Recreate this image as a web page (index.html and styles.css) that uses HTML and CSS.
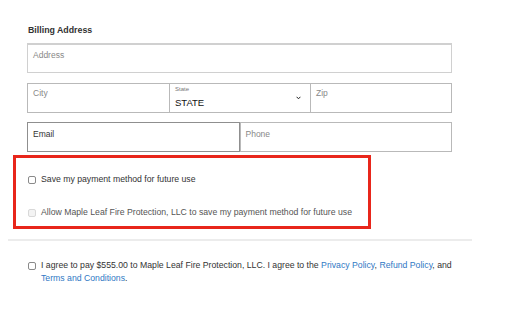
FILE: index.html
```html
<!DOCTYPE html>
<html lang="en">
<head>
    <meta charset="UTF-8">
    <title>Billing Address</title>
    <link rel="stylesheet" href="styles.css">
</head>
<body>
    <div class="wrap">
        <!--1. billing form-->
        <section class="billing">
            <h2 class="tit">Billing Address</h2>

            <div class="row one">
                <div class="cell"><span class="ph">Address</span></div>
            </div>

            <div class="row three">
                <div class="cell"><span class="ph">City</span></div>
                <div class="cell state">
                    <span class="lbl">State</span>
                    <span class="val">STATE</span>
                    <svg class="chev" width="5" height="4" viewBox="0 0 5 4">
                        <path d="M0.6 0.8 L2.5 2.8 L4.4 0.8" fill="none" stroke="#222" stroke-width="1"/>
                    </svg>
                </div>
                <div class="cell"><span class="ph">Zip</span></div>
            </div>

            <div class="row two">
                <div class="cell focus"><span class="ph dark">Email</span></div>
                <div class="cell"><span class="ph">Phone</span></div>
            </div>

            <!--2. save options (red marked)-->
            <div class="mark">
                <label class="chk">
                    <input type="checkbox">
                    <span>Save my payment method for future use</span>
                </label>
                <label class="chk off">
                    <input type="checkbox" disabled>
                    <span>Allow Maple Leaf Fire Protection, LLC to save my payment method for future use</span>
                </label>
            </div>
        </section>

        <hr class="line">

        <!--3. agree-->
        <section class="billing">
            <label class="chk agree">
                <input type="checkbox">
                <span>I agree to pay $555.00 to Maple Leaf Fire Protection, LLC. I agree to the <a href="#">Privacy Policy</a>, <a href="#">Refund Policy</a>, and <a href="#">Terms and Conditions</a>.</span>
            </label>
        </section>
    </div>
</body>
</html>
```

FILE: styles.css
```css
html,
body,
h2 {
    margin: 0;
    padding: 0;
}

body {
    background-color: #fff;
    font-family: "Liberation Sans", Arial, sans-serif;
    color: #333;
}

/*outer box*/
.wrap {
    width: 464px;
    margin-left: 8px;
    padding-top: 24px;
}

.billing {
    padding: 0 20px 0 19px;
}

/*1. title*/
.tit {
    font-size: 8.8px;
    line-height: 12px;
    font-weight: bold;
    color: #333;
    padding-left: 1px;
    margin-bottom: 7px;
}

/*input rows*/
.row {
    display: grid;
    height: 30px;
    box-sizing: border-box;
    border: 1px solid #b9b9b9;
    margin-bottom: 10px;
}
.row.one {
    border-color: #d0d0d0;
    border-top-width: 2px;
}
.row.three {
    grid-template-columns: 1fr 1fr 1fr;
}
.row.two {
    grid-template-columns: 1fr 1fr;
    margin-top: -1px;
    margin-bottom: 0;
}

.cell {
    position: relative;
    padding: 5px 5px 0;
}
.cell + .cell {
    border-left: 1px solid #b9b9b9;
}
.row.one .cell {
    padding-top: 4px;
}
.row.three .cell {
    padding-top: 3px;
}

/*darker frame on email*/
.cell.focus {
    margin: -1px 0 -1px -1px;
    border: 1px solid #8f8f8f;
}

.ph {
    display: block;
    font-size: 8.5px;
    line-height: 12px;
    color: #888;
}
.ph.dark {
    color: #333;
}

/*state select*/
.row.three .cell.state {
    padding-top: 1px;
}
.lbl {
    display: block;
    font-size: 6px;
    line-height: 8px;
    color: #777;
}
.val {
    display: block;
    font-size: 9.5px;
    line-height: 12px;
    color: #111;
    margin-top: 4px;
}
.chev {
    position: absolute;
    top: 12px;
    right: 9px;
}

/*2. red marked box*/
.mark {
    width: 358px;
    box-sizing: border-box;
    margin: 3px 0 0 -14px;
    padding: 15px 0 7px 12px;
    border: 3px solid #e8261b;
    display: flex;
    flex-direction: column;
    gap: 20px;
}

/*checkbox rows*/
.chk {
    display: flex;
    align-items: flex-start;
    font-size: 8.7px;
    line-height: 13px;
    color: #333;
}
.chk input {
    appearance: none;
    flex: none;
    width: 8px;
    height: 8px;
    margin: 2.5px 5px 0 0;
    border: 1px solid #8a8a8a;
    border-radius: 2px;
    background: #fff;
}
.chk.off {
    color: #555;
}
.chk.off input {
    border-color: #d8d8d8;
    background: #f3f3f3;
}

.chk a {
    color: #2f78c4;
    text-decoration: none;
}

/*divider*/
.line {
    margin: 10px 0 18px;
    height: 2px;
    border: 0;
    background: #ececec;
}

.agree {
    padding-left: 1px;
}
```
